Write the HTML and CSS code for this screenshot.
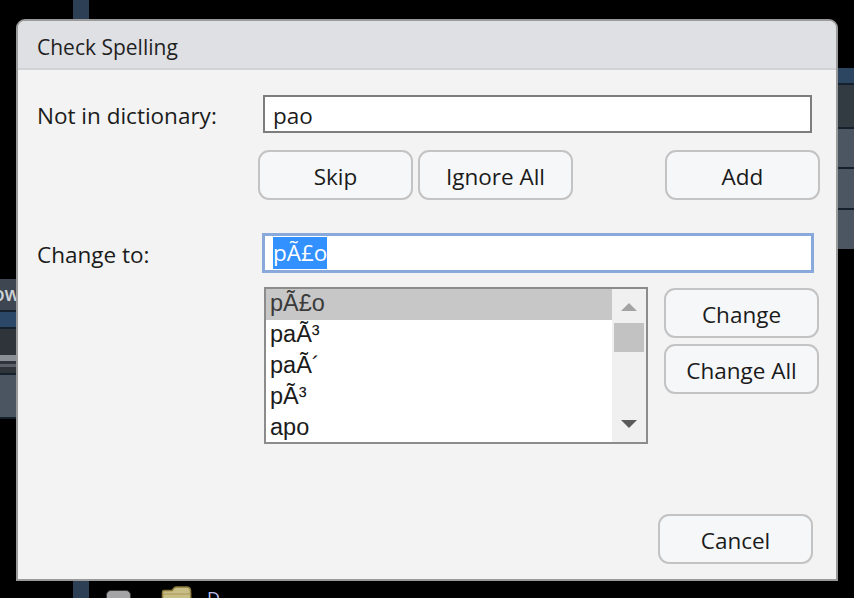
FILE: index.html
```html
<!DOCTYPE html>
<html lang="en">
<head>
<meta charset="utf-8">
<title>Check Spelling</title>
<link rel="stylesheet" href="styles.css">
</head>
<body>
<div class="desktop">
  <!-- windows behind the dialog -->
  <div class="bg-strip bg-top"></div>
  <div class="bg-strip bg-bottom"></div>
  <div class="bg-panel bg-left">
    <div class="pl-title"><span class="pl-text">ow</span></div>
    <div class="pl-tab"></div>
    <div class="pl-dark">
      <div class="pl-bar"></div>
      <div class="pl-bar2"></div>
    </div>
    <div class="pl-body"></div>
  </div>
  <div class="bg-panel bg-right">
    <div class="pr-tab"></div>
    <div class="pr-dark"></div>
    <div class="pr-row"></div>
    <div class="pr-row"></div>
    <div class="pr-row"></div>
  </div>
  <div class="taskbar">
    <span class="tb-square"></span>
    <svg class="tb-folder" width="32" height="18" viewBox="0 0 32 18">
      <path d="M1.5 18 V6 Q1.5 4.5 3 4.5 H11 L13 2 Q14 1 15.5 1 H26 Q29 1 29.5 4 L30 18" fill="#c9bd86" stroke="#8a7a3a" stroke-width="1.5"/>
      <path d="M1.5 8 H30" stroke="#a8995a" stroke-width="1"/>
    </svg>
    <span class="tb-label">D</span>
  </div>

  <!-- spelling dialog -->
  <div class="dialog">
    <div class="titlebar">Check Spelling</div>
    <div class="content">
      <div class="row row-word">
        <label class="label label-word">Not in dictionary:</label>
        <div class="field field-word">pao</div>
      </div>
      <div class="row row-actions">
        <button class="btn">Skip</button>
        <button class="btn">Ignore All</button>
        <button class="btn btn-add">Add</button>
      </div>
      <div class="row row-change">
        <label class="label label-change">Change to:</label>
        <div class="field field-change"><span class="sel">pÃ£o</span></div>
      </div>
      <div class="row row-list">
        <div class="listbox">
          <ul class="items">
            <li class="item current">pÃ£o</li>
            <li class="item">paÃ³</li>
            <li class="item">paÃ´</li>
            <li class="item">pÃ³</li>
            <li class="item">apo</li>
          </ul>
          <div class="scrollbar">
            <span class="arrow arrow-up"></span>
            <span class="thumb"></span>
            <span class="arrow arrow-down"></span>
          </div>
        </div>
        <div class="side-buttons">
          <button class="btn">Change</button>
          <button class="btn">Change All</button>
        </div>
      </div>
      <div class="row row-footer">
        <button class="btn">Cancel</button>
      </div>
    </div>
  </div>
</div>
</body>
</html>
```

FILE: styles.css
```css
* { box-sizing: border-box; }

html, body {
  margin: 0;
  padding: 0;
  background: #000;
}

.desktop {
  position: relative;
  width: 854px;
  height: 598px;
  overflow: hidden;
  background: #000;
  font-family: "Open Sans", "Noto Sans", sans-serif;
}

/* ---------- background windows ---------- */
.bg-strip {
  position: absolute;
  left: 73px;
  width: 16px;
  background: #2c3f55;
}
.bg-top { top: 0; height: 20px; }
.bg-bottom { top: 580px; height: 18px; }

.bg-panel {
  position: absolute;
  display: flex;
  flex-direction: column;
}
.bg-left {
  left: 0;
  top: 279px;
  width: 20px;
  height: 140px;
  background: #14202c;
}
.pl-title {
  height: 31px;
  background: #3d4651;
  overflow: hidden;
  display: flex;
  justify-content: flex-end;
}
.pl-text {
  color: #d0d4d8;
  font-size: 19px;
  line-height: 31px;
  font-weight: 600;
  white-space: nowrap;
}
.pl-tab { height: 15px; margin-top: 2px; background: #2c4868; }
.pl-dark {
  height: 44px;
  margin-top: 2px;
  background: #2e343a;
  display: flex;
  flex-direction: column;
}
.pl-bar { height: 6px; margin-top: 26px; background: #8a8f95; }
.pl-bar2 { height: 3px; margin-top: 3px; background: #5b6068; }
.pl-body { height: 42px; margin-top: 2px; background: #4a5561; }

.bg-right {
  left: 838px;
  top: 68px;
  width: 16px;
  height: 181px;
  background: #14202c;
}
.pr-tab { height: 15px; background: #2c4560; }
.pr-dark { height: 42px; margin-top: 2px; background: #333b42; }
.pr-row { height: 39px; margin-top: 2px; background: #4b5662; }

.taskbar {
  position: absolute;
  left: 106px;
  top: 586px;
  display: flex;
  align-items: flex-start;
}
.tb-square {
  width: 25px;
  height: 20px;
  margin-top: 4px;
  border-radius: 5px;
  background: #a4a4a6;
  border: 1px solid #3a3a3a;
}
.tb-folder { margin-left: 30px; }
.tb-label {
  margin-left: 14px;
  margin-top: 2px;
  color: #b8bce8;
  font-size: 18px;
  line-height: 20px;
}

/* ---------- dialog ---------- */
.dialog {
  position: absolute;
  left: 16px;
  top: 19px;
  width: 822px;
  height: 562px;
  border: 2px solid #9a9a9a;
  border-radius: 9px 9px 0 0;
  background: #f2f3f2;
  overflow: hidden;
  color: #1b1b1b;
}

.titlebar {
  height: 49px;
  padding-left: 19px;
  background: #dfe0e3;
  border-bottom: 2px solid #d2d3d7;
  font-size: 21px;
  line-height: 52px;
  color: #1f1f1f;
}

.content {
  display: flex;
  flex-direction: column;
  padding: 25px 0 0 19px;
}

.row { display: flex; }

.label {
  font-size: 22.5px;
  color: #1b1b1b;
  padding-top: 3px;
}

.field {
  background: #fff;
  font-size: 22.5px;
  color: #1b1b1b;
  display: flex;
  align-items: center;
}

/* Not in dictionary */
.row-word { align-items: center; height: 38px; }
.label-word { width: 226px; }
.field-word {
  width: 549px;
  height: 38px;
  border: 2px solid #7d7d7d;
  padding: 2px 0 0 8px;
}

/* Skip / Ignore All / Add */
.row-actions { margin-top: 17px; padding-left: 221px; gap: 5px; }
.btn-add { margin-left: 87px; }

.btn {
  width: 155px;
  height: 50px;
  border: 2px solid #c3c3c3;
  border-radius: 11px;
  background: #f6f7f9;
  font-family: "Open Sans", "Noto Sans", sans-serif;
  font-size: 22.5px;
  color: #1b1b1b;
  padding: 2px 0 0;
}

/* Change to */
.row-change { margin-top: 33px; align-items: center; height: 40px; }
.label-change { width: 225px; }
.field-change {
  width: 552px;
  height: 40px;
  border: 3px solid #89a9da;
  padding-left: 8px;
}
.sel {
  background: #3390ff;
  color: #fff;
  line-height: 32px;
  height: 32px;
}

/* suggestions */
.row-list { margin-top: 14px; padding-left: 227px; }
.listbox {
  width: 384px;
  height: 157px;
  border: 2px solid #8c8c8c;
  background: #fff;
  display: flex;
  overflow: hidden;
}
.items {
  list-style: none;
  margin: 0;
  padding: 0;
  flex: 1;
  font-family: "Liberation Sans", Arial, sans-serif;
  font-size: 23.5px;
  color: #1b1b1b;
}
.item {
  height: 31px;
  line-height: 29px;
  padding-left: 4px;
}
.item.current { background: #c7c7c7; color: #3a3a3a; }

.scrollbar {
  width: 34px;
  background: #f0f0f0;
  display: flex;
  flex-direction: column;
  align-items: center;
}
.arrow {
  width: 0;
  height: 0;
  border-left: 8px solid transparent;
  border-right: 8px solid transparent;
}
.arrow-up { margin-top: 14px; border-bottom: 8px solid #a3a3a3; }
.thumb { width: 30px; height: 29px; margin-top: 12px; background: #c2c2c2; }
.arrow-down { margin-top: 68px; border-top: 8px solid #5a5a5a; }

.side-buttons {
  display: flex;
  flex-direction: column;
  gap: 6px;
  margin-left: 16px;
  margin-top: 1px;
}

.row-footer { margin-top: 70px; padding-left: 621px; }
```
